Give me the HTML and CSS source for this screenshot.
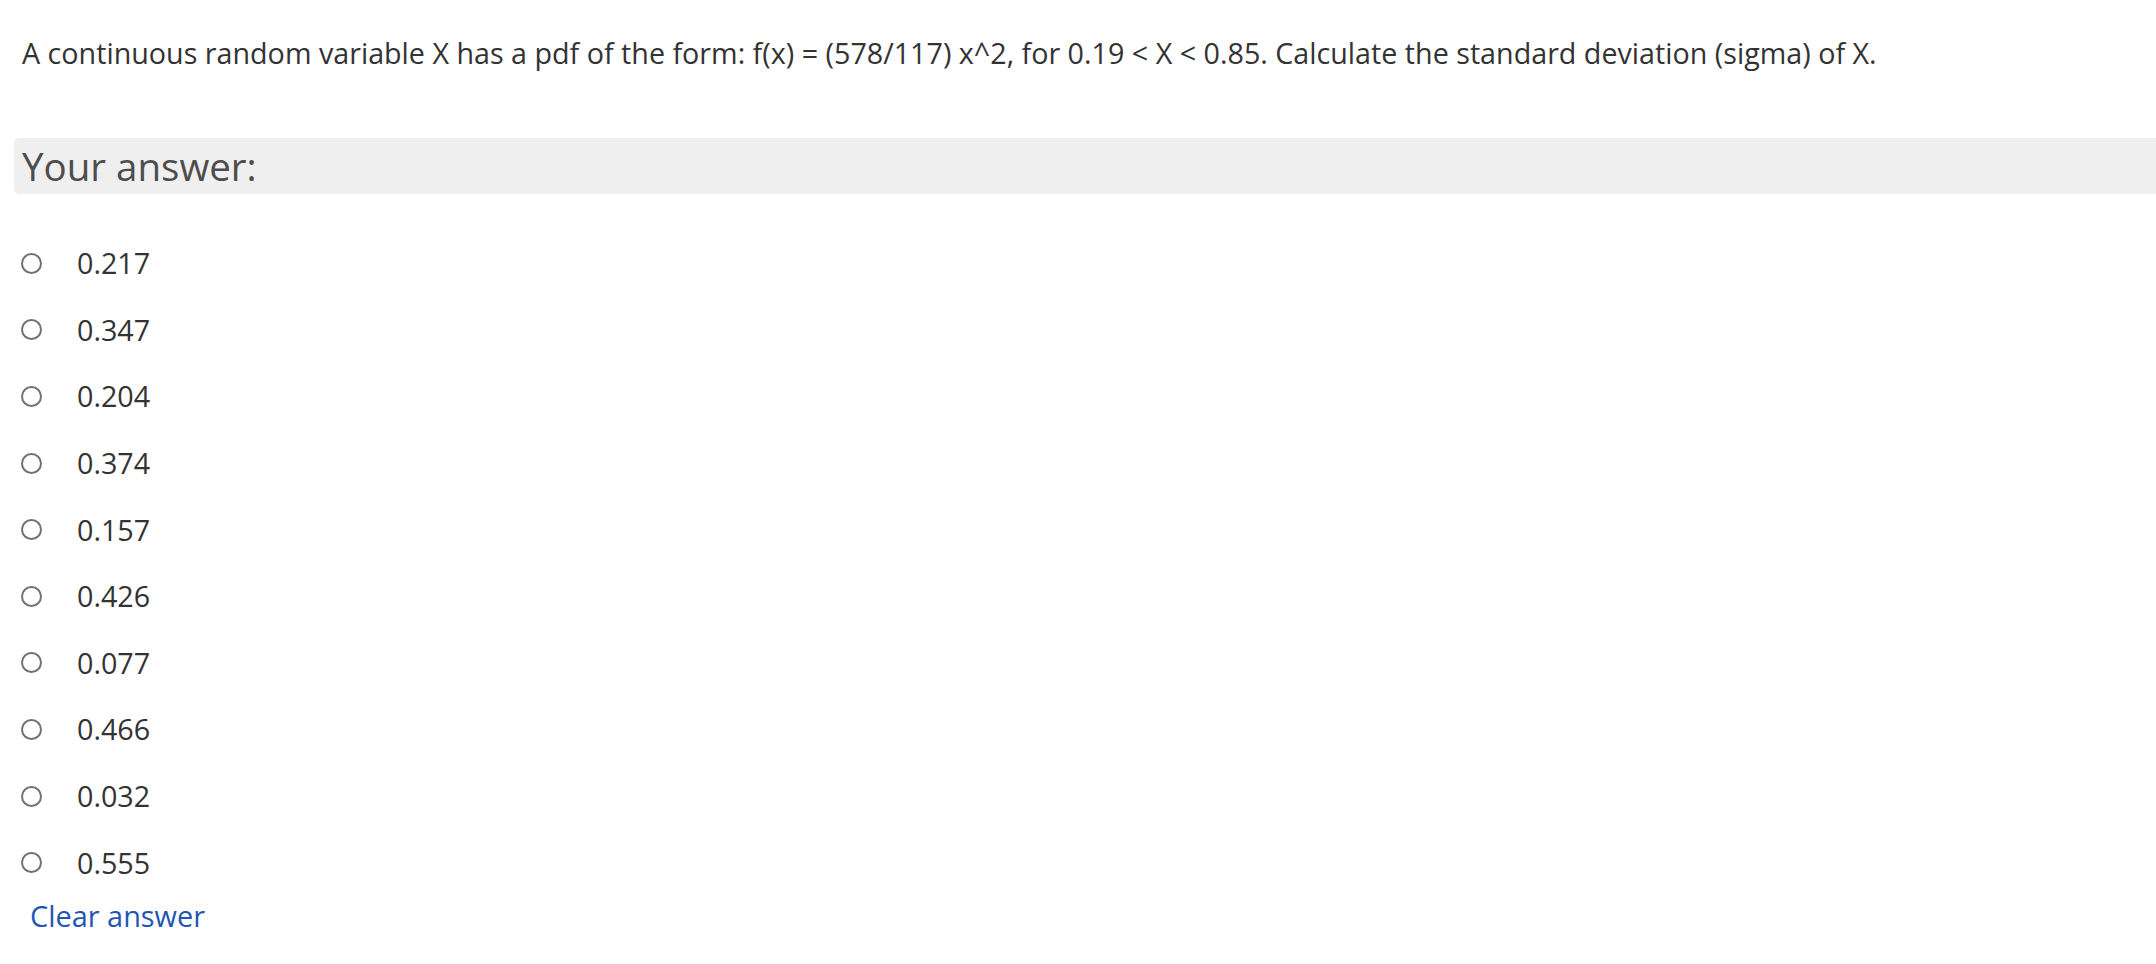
FILE: index.html
```html
<!DOCTYPE html>
<html>
<head>
<meta charset="utf-8">
<link rel="stylesheet" href="styles.css">
</head>
<body>
<div class="question">
  <p class="prompt">A continuous random variable X has a pdf of the form: f(x) = (578/117) x^2, for 0.19 &lt; X &lt; 0.85. Calculate the standard deviation (sigma) of X.</p>
  <div class="answer-head">Your answer:</div>
  <ul class="options">
    <li class="option"><span class="radio"></span><span class="label">0.217</span></li>
    <li class="option"><span class="radio"></span><span class="label">0.347</span></li>
    <li class="option"><span class="radio"></span><span class="label">0.204</span></li>
    <li class="option"><span class="radio"></span><span class="label">0.374</span></li>
    <li class="option"><span class="radio"></span><span class="label">0.157</span></li>
    <li class="option"><span class="radio"></span><span class="label">0.426</span></li>
    <li class="option"><span class="radio"></span><span class="label">0.077</span></li>
    <li class="option"><span class="radio"></span><span class="label">0.466</span></li>
    <li class="option"><span class="radio"></span><span class="label">0.032</span></li>
    <li class="option"><span class="radio"></span><span class="label">0.555</span></li>
  </ul>
  <a class="clear" href="#">Clear answer</a>
</div>
</body>
</html>
```

FILE: styles.css
```css
html, body {
  margin: 0;
  padding: 0;
  background: #ffffff;
}
body {
  font-family: "Open Sans", "Noto Sans", sans-serif;
  color: #333333;
}
.question {
  padding: 33px 0 0 14px;
}
.prompt {
  margin: 0 0 0 8px;
  font-size: 28.7px;
  line-height: 40px;
  color: #333333;
}
.answer-head {
  margin-top: 65px;
  height: 56px;
  background: #efefef;
  border-radius: 5px 0 0 5px;
  padding-left: 8px;
  font-size: 38.5px;
  line-height: 56px;
  color: #4d4d4d;
}
.options {
  list-style: none;
  margin: 36px 0 0 0;
  padding: 0;
}
.option {
  display: flex;
  align-items: center;
  height: 66.6px;
}
.radio {
  box-sizing: border-box;
  width: 21px;
  height: 21px;
  border: 2px solid #717171;
  border-radius: 50%;
  margin-left: 7px;
  margin-right: 35px;
  flex: none;
}
.label {
  font-size: 28.7px;
  line-height: 40px;
  color: #333333;
}
.clear {
  display: inline-block;
  margin-left: 16px;
  font-size: 28.9px;
  line-height: 40px;
  color: #1f56b3;
  text-decoration: none;
}
```
